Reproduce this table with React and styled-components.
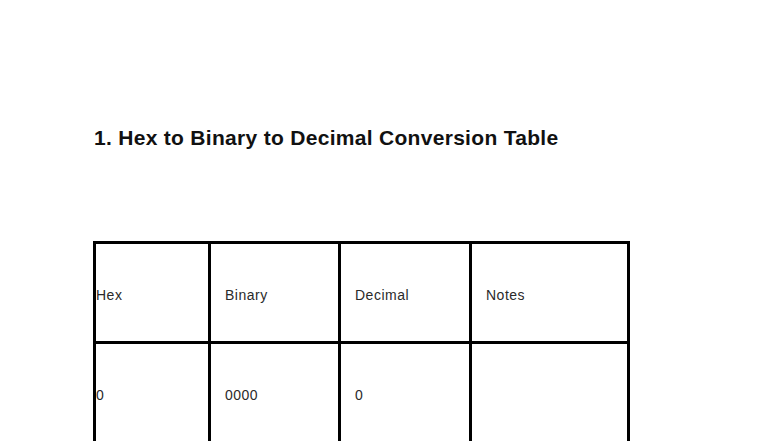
import styled, { createGlobalStyle } from "styled-components";

const GlobalStyle = createGlobalStyle`
  html, body {
    margin: 0;
    padding: 0;
    background: #fff;
  }
  body {
    font-family: "Liberation Sans", Arial, sans-serif;
    color: #000;
  }
`;

const Page = styled.div`
  padding: 126px 0 0 93px;
`;

const Title = styled.h2`
  margin: 0 0 91px 1px;
  font-size: 21px;
  line-height: 24px;
  letter-spacing: 0.3px;
  font-weight: bold;
  color: #111;
`;

const Table = styled.table`
  border-collapse: collapse;
  table-layout: fixed;
  width: 537px;
`;

const Cell = styled.td`
  border: 3px solid #000;
  height: 92px;
  padding: 5px 0 0 ${(p) => (p.$first ? "0" : "14px")};
  font-size: 14px;
  letter-spacing: 0.5px;
  color: #2a2a2a;
  vertical-align: middle;
`;

const columns = [115, 130, 131, 158];

const rows = [
  ["Hex", "Binary", "Decimal", "Notes"],
  ["0", "0000", "0", ""],
];

export default function App() {
  return (
    <>
      <GlobalStyle />
      <Page>
        <Title>1. Hex to Binary to Decimal Conversion Table</Title>
        <Table>
          <colgroup>
            {columns.map((w, i) => (
              <col key={i} style={{ width: w }} />
            ))}
          </colgroup>
          <tbody>
            {rows.map((row, r) => (
              <tr key={r}>
                {row.map((text, c) => (
                  <Cell key={c} $first={c === 0}>
                    {text}
                  </Cell>
                ))}
              </tr>
            ))}
          </tbody>
        </Table>
      </Page>
    </>
  );
}
